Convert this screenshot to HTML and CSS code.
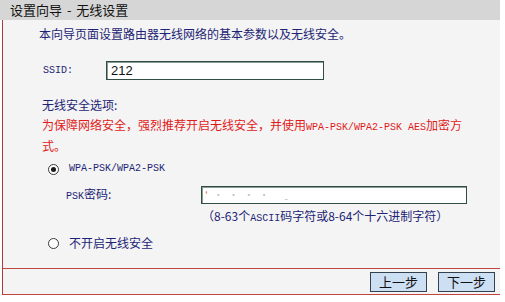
FILE: index.html
```html
<!DOCTYPE html>
<html lang="zh-CN">
<head>
<meta charset="utf-8">
<title>设置向导 - 无线设置</title>
<link rel="stylesheet" href="styles.css">
</head>
<body>
<div class="wizard">
  <div class="title">设置向导 - 无线设置</div>
  <div class="panel">
    <div class="content">
      <p class="intro">本向导页面设置路由器无线网络的基本参数以及无线安全。</p>
      <div class="ssid-row">
        <span class="mono ssid-label">SSID:</span>
        <span class="field ssid-field">212</span>
      </div>
      <p class="opt-label">无线安全选项:</p>
      <p class="warn"><span>为保障网络安全，强烈推荐开启无线安全，并使用</span><span class="mono">WPA-PSK/WPA2-PSK AES</span><span>加密方</span><br><span>式。</span></p>
      <div class="radio-row radio-first">
        <span class="radio checked"></span>
        <span class="mono">WPA-PSK/WPA2-PSK</span>
      </div>
      <div class="psk-row">
        <span class="psk-label"><span class="mono">PSK</span>密码:</span>
        <span class="field psk-field"><span class="mask">'</span><span class="mask faint">˙ ˙ ˙ ˙</span><span class="mask faint low">-</span></span>
      </div>
      <p class="hint">（8-63个<span class="mono">ASCII</span>码字符或8-64个十六进制字符）</p>
      <div class="radio-row radio-second">
        <span class="radio"></span>
        <span>不开启无线安全</span>
      </div>
    </div>
    <div class="footer">
      <span class="btn">上一步</span>
      <span class="btn">下一步</span>
    </div>
  </div>
</div>
</body>
</html>
```
FILE: styles.css
```css
* { box-sizing: border-box; }
html, body { margin: 0; padding: 0; background: #ffffff; }
body {
  font-family: "Noto Sans CJK SC", "Noto Sans", sans-serif;
  font-size: 12px;
  color: #1d2475;
}
p { margin: 0; }
.wizard { width: 500px; }
.title {
  height: 20px;
  line-height: 20px;
  background: #d6d6d6;
  color: #111111;
  font-size: 13px;
  padding-left: 10px;
  word-spacing: 2px;
}
.panel {
  margin-left: 2px;
  border-left: 1px solid #b03a36;
  background: #f4f4f4;
}
.content {
  height: 249px;
  padding-left: 36px;
  line-height: 18px;
  border-bottom: 1px solid #c0443f;
}
.mono { font-family: "Liberation Mono", monospace; font-size: 10px; }
.intro { padding-top: 5px; }
.ssid-row {
  display: flex;
  align-items: center;
  margin-top: 18px;
  padding-left: 4px;
  height: 19px;
}
.ssid-label { width: 63px; }
.field {
  display: inline-block;
  background: #ffffff;
  border: 1px solid #2f4d44;
  box-shadow: inset 1px 1px 0 #8a9a94;
}
.ssid-field {
  width: 218px;
  height: 19px;
  line-height: 17px;
  padding-left: 4px;
  color: #111;
  font-family: "Liberation Sans", sans-serif;
  font-size: 13px;
}
.opt-label { margin-top: 16px; padding-left: 3px; }
.warn {
  margin-top: 2px;
  padding-left: 3px;
  color: #e01b1b;
}
.radio-row {
  display: flex;
  align-items: center;
  height: 18px;
  padding-left: 9px;
  gap: 10px;
}
.radio-first { margin-top: 5px; }
.radio-second { margin-top: 6px; }
.radio {
  width: 11px;
  height: 11px;
  border-radius: 50%;
  border: 1px solid #3a3a3a;
  background: #ffffff;
  display: flex;
  align-items: center;
  justify-content: center;
}
.radio.checked::after {
  content: "";
  width: 5px;
  height: 5px;
  border-radius: 50%;
  background: #1a1a1a;
}
.psk-row {
  display: flex;
  align-items: center;
  margin-top: 8px;
  height: 18px;
  padding-left: 27px;
}
.psk-label { width: 135px; }
.psk-field {
  width: 266px;
  height: 18px;
  line-height: 16px;
  padding-left: 3px;
  font-size: 10px;
}
.mask { color: #c07a40; }
.mask.faint { color: #b9b9b9; margin-left: 8px; letter-spacing: 4px; }
.mask.low { position: relative; top: 3px; margin-left: 14px; }
.hint { margin-top: 3px; padding-left: 163px; }
.footer {
  height: 26px;
  display: flex;
  justify-content: flex-end;
  align-items: flex-start;
  gap: 11px;
  padding-top: 3px;
  padding-right: 5px;
  border-bottom: 1px solid #c0443f;
}
.btn {
  width: 57px;
  height: 20px;
  line-height: 18px;
  text-align: center;
  background: #cddff3;
  border: 1px solid #34424f;
  color: #111;
  font-size: 13px;
}
```
